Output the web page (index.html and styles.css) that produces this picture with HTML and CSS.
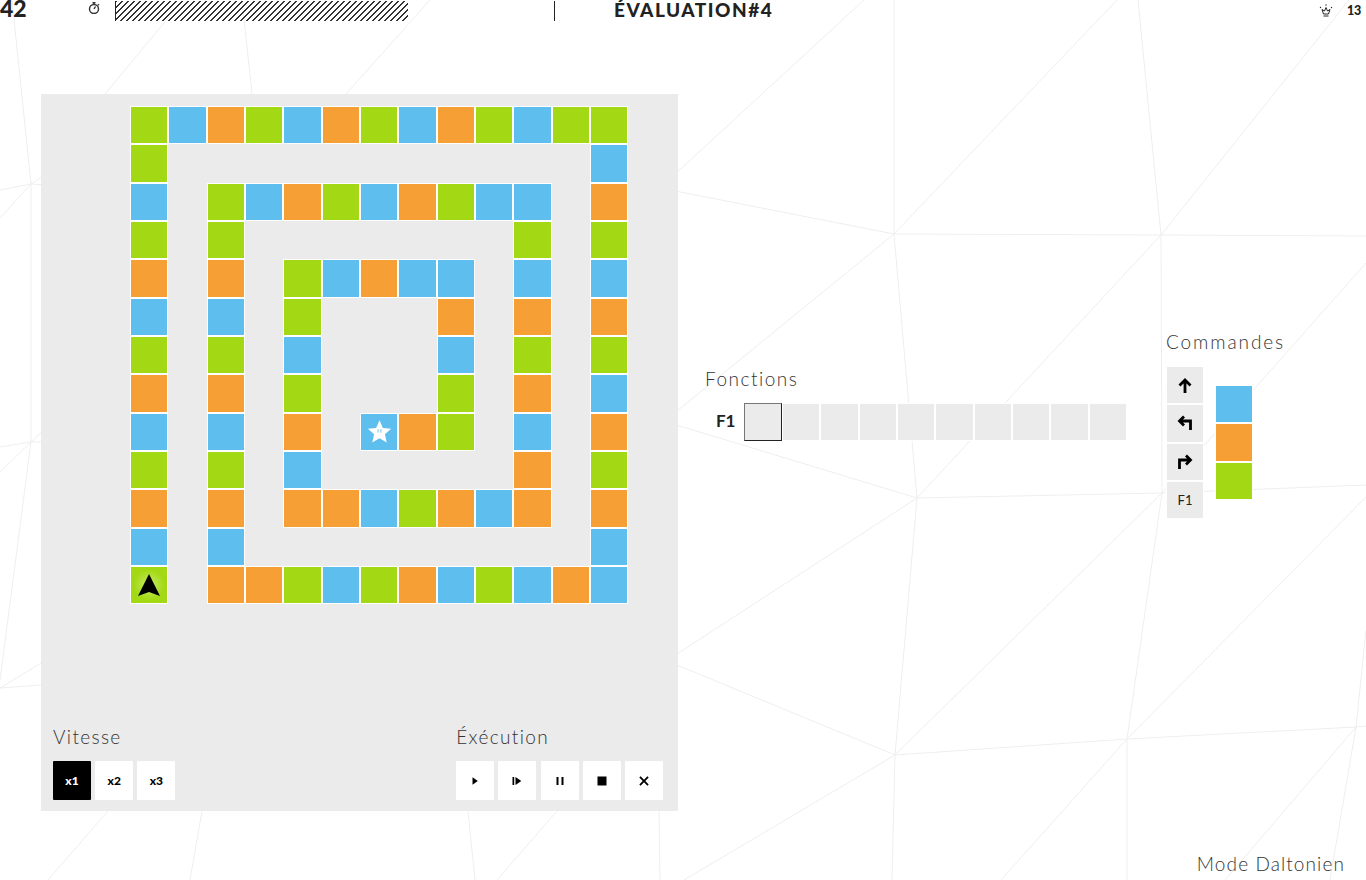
FILE: index.html
```html
<!DOCTYPE html>
<html lang="fr">
<head>
    <meta charset="UTF-8">
    <title>Évaluation#4</title>
    <link rel="stylesheet" href="styles.css">
</head>
<body>
    <!-- fond : maillage de lignes -->
    <svg class="mesh" viewBox="0 0 1366 880" aria-hidden="true">
        <path d="M12 0L31 184L0 190M31 184L41 184.500M31 184L0 218M31 184L60 165M31 184V442L0 447M31 442H41M31 442L0 472M31 442L60 415M31 442L0 680M0 688L41 685M0 688L41 663"/>
        <path d="M183 0L105 94M242 0L252 94M430 0L346 94M108 811L48 880M202 811L190 880M468 811L475 880M557 811L497 880M659 811L660 880"/>
        <path d="M864 0L660 188M894 0V234M1117 0L894 234M1138 0L1161 235M1349 0L1161 235M660 188L894 234L1161 235L1366 236M894 234L660 425M894 234L917 498M1161 235L1162 493M1161 235L917 498M1366 263L1162 493"/>
        <path d="M917 498L660 420M917 498L1162 493L1366 485M917 498L895 755M917 498L660 665M895 755L660 658M895 755L1162 493M895 755L1127 739L1356 727L1366 726M1162 493L1127 739M1127 739L1366 497M1356 727L1366 630M895 755L892 880M895 755L684 880M1127 739V880M1127 739L1001 880M1356 727L1225 880M1356 727L1330 880"/>
    </svg>

    <header class="top-bar">
        <div class="logo">42</div>
        <svg class="timer-icon" viewBox="0 0 12 12">
            <circle cx="6" cy="7" r="4.500"/>
            <path d="M4.500 .8H7.500M6 .8V2.500M6 7L7.500 4.500M10 2.200L11 3.200"/>
        </svg>
        <div class="timer-bar"></div>
        <div class="divider"></div>
        <div class="title">ÉVALUATION#4</div>
        <div class="score">
            <svg class="crown-icon" viewBox="0 0 14 13">
                <path d="M3 5.500L4.500 10H9.500L11 5.500L8.500 7L7 3.500L5.500 7Z"/>
                <path d="M4.500 12H9.500"/>
                <circle class="dot" cx="7" cy="1" r=".7"/>
                <circle class="dot" cx="1.500" cy="3.500" r=".7"/>
                <circle class="dot" cx="12.500" cy="3.500" r=".7"/>
            </svg>
            <span>13</span>
        </div>
    </header>

    <main class="game">
        <section class="stage">
            <div class="board" id="board"></div>
            <div class="controls">
                <div class="control-group">
                    <h2 class="label">Vitesse</h2>
                    <div class="buttons">
                        <button class="ctrl active">x1</button>
                        <button class="ctrl">x2</button>
                        <button class="ctrl">x3</button>
                    </div>
                </div>
                <div class="control-group">
                    <h2 class="label">Éxécution</h2>
                    <div class="buttons">
                        <button class="ctrl"><svg viewBox="0 0 12 12"><path d="M3.500 2.200L8.800 6L3.500 9.800Z"/></svg></button>
                        <button class="ctrl"><svg viewBox="0 0 12 12"><path d="M1.500 2H3.200V10H1.500ZM4.500 2L10.300 6L4.500 10Z"/></svg></button>
                        <button class="ctrl"><svg viewBox="0 0 12 12"><path d="M2.500 2H4.500V10H2.500ZM7.500 2H9.500V10H7.500Z"/></svg></button>
                        <button class="ctrl"><svg viewBox="0 0 12 12"><path d="M1.500 1.500H10.500V10.500H1.500Z"/></svg></button>
                        <button class="ctrl"><svg viewBox="0 0 12 12"><path d="M2.600 1.300L6 4.700L9.400 1.300L10.700 2.600L7.300 6L10.700 9.400L9.400 10.700L6 7.300L2.600 10.700L1.300 9.400L4.700 6L1.300 2.600Z"/></svg></button>
                    </div>
                </div>
            </div>
        </section>

        <section class="functions">
            <h2 class="label">Fonctions</h2>
            <div class="function-row">
                <span class="function-name">F1</span>
                <div class="slots" id="slots"></div>
            </div>
        </section>

        <section class="commands">
            <h2 class="label">Commandes</h2>
            <div class="command-columns">
                <div class="command-list">
                    <button class="command"><svg viewBox="0 0 20 20"><path d="M10 18V6M4.500 10.500L10 5L15.500 10.500"/></svg></button>
                    <button class="command"><svg viewBox="0 0 20 20"><path d="M15.500 17V8H5M9 3.500L4.500 8L9 12.500"/></svg></button>
                    <button class="command"><svg viewBox="0 0 20 20"><path d="M4.500 17V8H15M11 3.500L15.500 8L11 12.500"/></svg></button>
                    <button class="command">F1</button>
                </div>
                <div class="color-list">
                    <div class="cell blue"></div>
                    <div class="cell orange"></div>
                    <div class="cell green"></div>
                </div>
            </div>
        </section>
    </main>

    <footer class="page-footer">Mode Daltonien</footer>

    <script src="script.js"></script>
</body>
</html>
```

FILE: styles.css
```css
* {
    margin: 0;
    padding: 0;
    box-sizing: border-box;
}

html, body {
    height: 100%;
    overflow: hidden;
}

body {
    position: relative;
    font-family: 'Lato', 'Open Sans', sans-serif;
    background-color: #fff;
    color: #222;
}

.mesh {
    position: absolute;
    top: 0;
    left: 0;
    width: 1366px;
    height: 880px;
    fill: none;
    stroke: #eee;
    stroke-width: 1;
}

.top-bar, .game, .page-footer {
    position: relative;
}

/* barre du haut */
.top-bar {
    display: flex;
    align-items: flex-start;
    height: 21px;
}

.logo {
    width: 26px;
    font-size: 23px;
    line-height: 17px;
    font-weight: 900;
    color: #222;
}

.timer-icon {
    width: 12px;
    height: 12px;
    margin: 2px 0 0 62px;
    fill: none;
    stroke: #333;
    stroke-width: 1.400;
}

.timer-bar {
    width: 293px;
    height: 20px;
    margin: 1px 0 0 15px;
    border-left: 1px solid #222;
    background-image: repeating-linear-gradient(135deg, #333 0, #333 1px, transparent 1px, transparent 4.240px);
}

.divider {
    width: 1px;
    height: 20px;
    margin: 1px 0 0 146px;
    background-color: #222;
}

.title {
    margin-left: 59px;
    font-size: 19px;
    line-height: 20px;
    font-weight: 900;
    letter-spacing: 1.500px;
}

.score {
    display: flex;
    align-items: center;
    gap: 14px;
    margin-left: auto;
    padding: 3px 5px 0 0;
    font-size: 12.500px;
    font-weight: 900;
    letter-spacing: -.3px;
}

.crown-icon {
    width: 14px;
    height: 13px;
    fill: none;
    stroke: #222;
    stroke-width: 1;
}

.crown-icon .dot {
    fill: #222;
    stroke: none;
}

/* zone de jeu */
.game {
    display: flex;
    align-items: flex-start;
    padding: 73px 0 0 41px;
}

.stage {
    display: flex;
    flex-direction: column;
    width: 637px;
    height: 717px;
    padding: 12px 15px 11px 12px;
    background-color: #ebebeb;
}

.board {
    display: grid;
    grid-template-columns: repeat(13, 38.330px);
    grid-auto-rows: 38.330px;
    margin-left: 77px;
}

.cell {
    display: flex;
    align-items: center;
    justify-content: center;
    width: 38.330px;
    height: 38.330px;
    border: 1px solid #fff;
}

.cell.empty {
    border: 0;
}

.blue {
    background-color: #5ebeee;
}

.orange {
    background-color: #f59f34;
}

.green {
    background-color: #a2d914;
}

.cell.start {
    background-image: radial-gradient(circle, #cbe96a 0, #a2d914 60%);
}

.ship {
    width: 24px;
    height: 24px;
    fill: #000;
}

.star {
    width: 27px;
    height: 27px;
}

.star .body {
    fill: #fff;
}

.star .eye {
    fill: #5ebeee;
}

.controls {
    display: flex;
    justify-content: space-between;
    margin-top: auto;
}

.label {
    font-size: 19px;
    line-height: 24px;
    font-weight: 300;
    letter-spacing: 1.500px;
    color: #333;
}

.control-group .label {
    margin-bottom: 12px;
    letter-spacing: 1.350px;
}

.buttons {
    display: flex;
    gap: 4.200px;
}

.ctrl {
    display: flex;
    align-items: center;
    justify-content: center;
    width: 38px;
    height: 39px;
    border: 0;
    border-radius: 1px;
    background-color: #fff;
    color: #000;
    font-family: inherit;
    font-size: 12px;
    font-weight: 900;
}

.ctrl.active {
    background-color: #000;
    color: #fff;
}

.ctrl svg {
    width: 12px;
    height: 12px;
    fill: #000;
}

/* fonctions */
.functions {
    width: 422px;
    margin: 273px 0 0 27px;
}

.functions .label {
    margin-bottom: 12px;
}

.function-row {
    display: flex;
    align-items: center;
}

.function-name {
    width: 39px;
    padding: 0 0 3px 11px;
    font-size: 17px;
    font-weight: 700;
}

.slots {
    display: flex;
}

.slot {
    width: 38.330px;
    height: 38.330px;
    border: 1px solid #fff;
    background-color: #ebebeb;
}

.slot.current {
    border: 1px solid #222;
    border-top-color: #777;
    border-left-color: #777;
}

/* commandes */
.commands {
    margin: 236px 0 0 39px;
}

.commands .label {
    margin-bottom: 12px;
    letter-spacing: 1.900px;
}

.command-columns {
    display: flex;
    align-items: flex-start;
    gap: 11px;
}

.command {
    display: flex;
    align-items: center;
    justify-content: center;
    width: 38px;
    height: 38.330px;
    border: 1px solid #fff;
    background-color: #ebebeb;
    color: #222;
    font-family: inherit;
    font-size: 13px;
    font-weight: 400;
}

.command svg {
    width: 20px;
    height: 20px;
    fill: none;
    stroke: #000;
    stroke-width: 2.800;
}

.color-list {
    margin-top: 19px;
}

.page-footer {
    margin-top: 41px;
    padding-right: 21px;
    text-align: right;
    font-size: 19px;
    line-height: 24px;
    font-weight: 300;
    letter-spacing: 1.100px;
    color: #333;
}
```

FILE: script.js
```js
// b = bleu, o = orange, g = vert, . = vide
const rows = [
    'gbogbogbogbgg',
    'g...........b',
    'b.gbogbogbb.o',
    'g.g.......g.g',
    'o.o.gbobb.b.b',
    'b.b.g...o.o.o',
    'g.g.b...b.g.g',
    'o.o.g...g.o.b',
    'b.b.o.bog.b.o',
    'g.g.b.....o.g',
    'o.o.oobgobo.o',
    'b.b.........b',
    'g.oogbgobgbob',
];
const colors = { b: 'blue', o: 'orange', g: 'green' };

const shipIcon = '<svg class="ship" viewBox="0 0 24 24"><path d="M12 1L1 23L12 19L23 23Z"/></svg>';
const starIcon = '<svg class="star" viewBox="0 0 24 24">'
    + '<path class="body" d="M12 2L15 8.800L22.300 9.500L16.800 14.400L18.400 21.700L12 17.900L5.600 21.700L7.200 14.400L1.700 9.500L9 8.800Z"/>'
    + '<rect class="eye" x="10.300" y="10" width=".8" height="3"/><rect class="eye" x="12.900" y="10" width=".8" height="3"/></svg>';

const board = document.querySelector('#board');
rows.forEach((row, y) => {
    [...row].forEach((c, x) => {
        const cell = document.createElement('div');
        cell.classList.add('cell', colors[c] || 'empty');
        if (x === 0 && y === 12) {
            cell.classList.add('start');
            cell.innerHTML = shipIcon;
        }
        if (x === 6 && y === 8) {
            cell.innerHTML = starIcon;
        }
        board.appendChild(cell);
    });
});

const slots = document.querySelector('#slots');
for (let i = 0; i < 10; i++) {
    const slot = document.createElement('div');
    slot.classList.add('slot');
    if (i === 0) {
        slot.classList.add('current');
    }
    slots.appendChild(slot);
}
```
